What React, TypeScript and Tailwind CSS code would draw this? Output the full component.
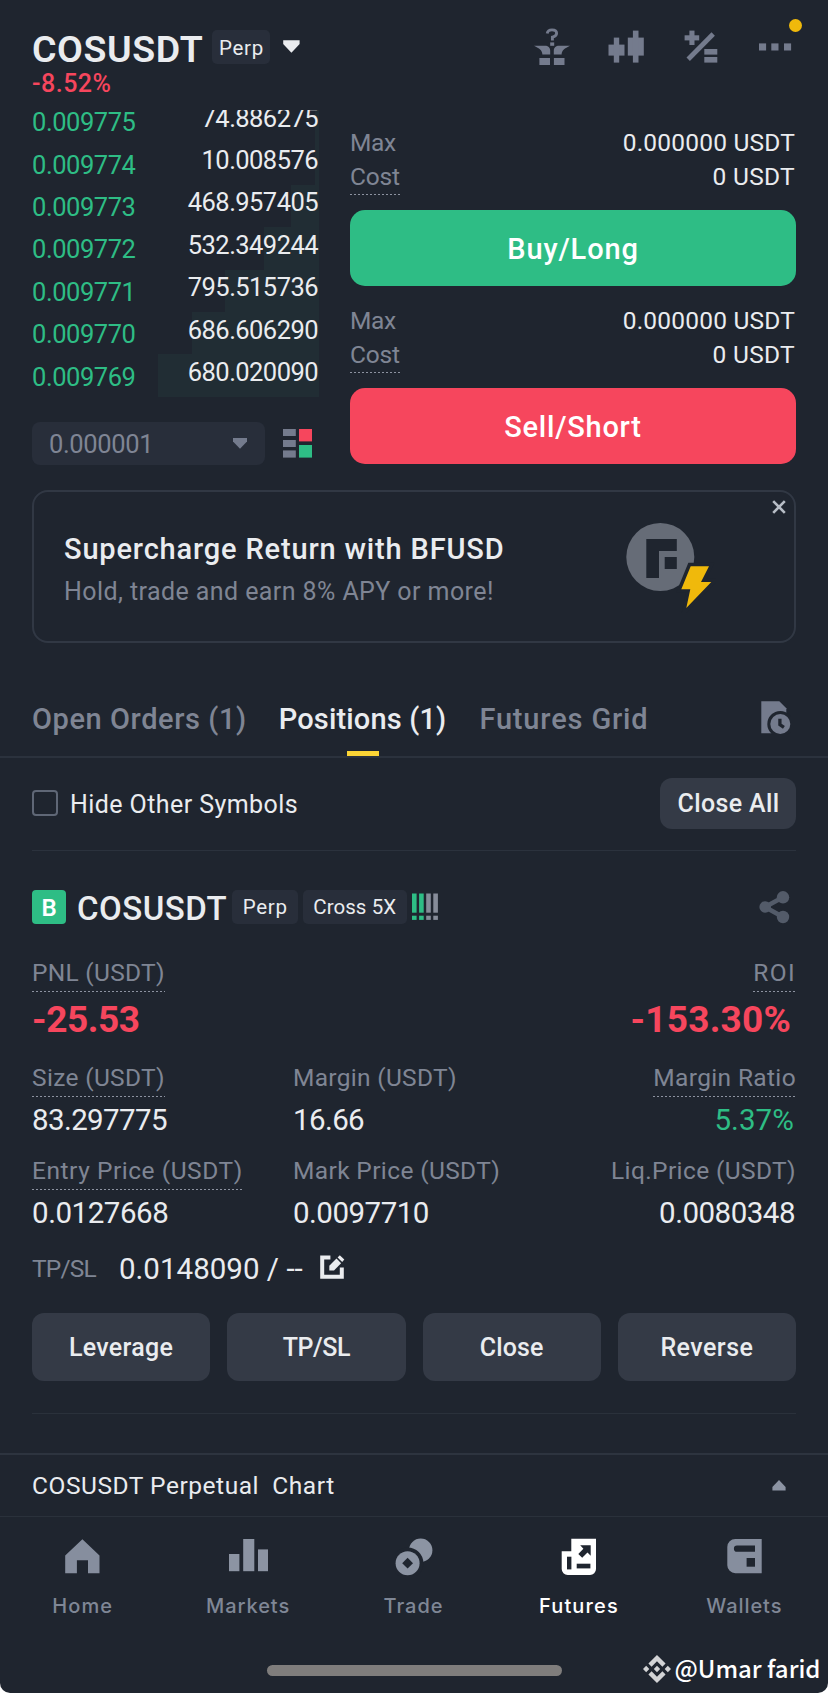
import type { ReactNode } from "react";
import { SiBinance } from "react-icons/si";

const book = [
  { price: "0.009775", qty: "74.886275", depth: 4 },
  { price: "0.009774", qty: "10.008576", depth: 4 },
  { price: "0.009773", qty: "468.957405", depth: 28 },
  { price: "0.009772", qty: "532.349244", depth: 55 },
  { price: "0.009771", qty: "795.515736", depth: 94 },
  { price: "0.009770", qty: "686.606290", depth: 127 },
  { price: "0.009769", qty: "680.020090", depth: 161 },
];

function GiftIcon() {
  return (
    <svg width="36" height="37" viewBox="0 0 36 37" fill="#747b8d">
      <path d="M13.2 5.4C13.6 3 15.2 1.9 18 1.9C21 1.9 22.6 3.2 22.6 5.3C22.6 7.5 20.9 8.5 18.4 9.1V12.4" fill="none" stroke="#747b8d" strokeWidth="2.9" />
      <rect x="16.2" y="14.4" width="4" height="3.4" />
      <path d="M0 17.8H11C14 17.8 16.2 19.8 16.2 22.6V26.4H8.4C8.2 22.4 5.4 20.4 0 17.8Z" />
      <path d="M36 17.8H25C22 17.8 19.8 19.8 19.8 22.6V26.4H27.6C27.8 22.4 30.6 20.4 36 17.8Z" />
      <rect x="5.4" y="30" width="10.6" height="7" />
      <rect x="19.9" y="30" width="10.6" height="7" />
    </svg>
  );
}

function CandlesIcon() {
  return (
    <svg width="36" height="33" viewBox="0 0 36 33" fill="#747b8d">
      <rect x="0.5" y="14.6" width="16" height="11" />
      <rect x="5.8" y="7.6" width="5.4" height="25" />
      <rect x="19.8" y="7.6" width="16" height="18" />
      <rect x="24.9" y="0.6" width="5.6" height="32" />
    </svg>
  );
}

function CalcIcon() {
  return (
    <svg width="36" height="33" viewBox="0 0 36 33" fill="#747b8d">
      <rect x="1.6" y="5.3" width="14.6" height="5.1" />
      <rect x="6.4" y="0.6" width="5.1" height="14.4" />
      <path d="M5.2 29.2L30.2 4" stroke="#747b8d" strokeWidth="4.8" />
      <rect x="21.3" y="19" width="13" height="5.6" />
      <rect x="21.3" y="27" width="13" height="5.6" />
    </svg>
  );
}

function MoreIcon() {
  return (
    <svg width="36" height="8" viewBox="0 0 36 8" fill="#747b8d">
      <rect x="2" y="0.4" width="7.1" height="7.1" />
      <rect x="14.3" y="0.4" width="7.2" height="7.1" />
      <rect x="27" y="0.4" width="7.1" height="7.1" />
    </svg>
  );
}

function BookLayoutIcon() {
  return (
    <svg width="30" height="29" viewBox="0 0 30 29">
      <g fill="#747b8d">
        <rect x="0" y="0" width="12.8" height="7" />
        <rect x="0" y="11" width="12.8" height="7" />
        <rect x="0" y="21.4" width="12.8" height="7.2" />
      </g>
      <rect x="16" y="0" width="13" height="12.4" fill="#f6465d" />
      <rect x="16" y="16" width="13" height="12.6" fill="#2ebd85" />
    </svg>
  );
}

function BannerArt() {
  return (
    <svg width="90" height="90" viewBox="0 0 90 90">
      <circle cx="34.3" cy="34" r="34" fill="#666c77" />
      <path d="M20.3 16H50.8V28H33V55H20.3Z" fill="#1f252f" />
      <rect x="38.7" y="34" width="12.1" height="12" fill="#1f252f" />
      <path
        d="M64.7 43.3H83L75 59H85.3L60.3 85L64.3 66.3H55.3Z"
        fill="#f0b90b"
        stroke="#1f252f"
        strokeWidth="7"
        paintOrder="stroke"
      />
    </svg>
  );
}

function HistoryIcon() {
  return (
    <svg width="30" height="34" viewBox="0 0 30 34">
      <path d="M0.3 0.3H18.3L25.3 7.3V32.3H0.3Z" fill="#747b8d" />
      <circle cx="19.3" cy="23" r="13" fill="#1f252f" />
      <circle cx="19.3" cy="23" r="10" fill="#747b8d" />
      <path d="M18.9 17.8V23.6L22.9 26.4" fill="none" stroke="#1f252f" strokeWidth="3.3" />
    </svg>
  );
}

function RiskIcon() {
  return (
    <svg width="27" height="28" viewBox="0 0 27 28">
      {[0, 7.1, 14.2, 21.3].map((x, i) => (
        <g key={x} fill={i < 2 ? "#2ebd85" : "#868c99"}>
          <rect x={x} y="0.5" width="4.6" height="19.2" />
          <rect x={x} y="22.7" width="4.6" height="4.2" />
        </g>
      ))}
    </svg>
  );
}

function ShareIcon() {
  return (
    <svg width="31" height="33" viewBox="0 0 31 33" fill="#535b69" stroke="#535b69">
      <path d="M24 6.3L6 16L24 26" fill="none" strokeWidth="4.6" />
      <circle cx="6.2" cy="16" r="5.8" stroke="none" />
      <circle cx="24" cy="6.3" r="6.2" stroke="none" />
      <circle cx="24" cy="26" r="6.2" stroke="none" />
    </svg>
  );
}

function EditIcon() {
  return (
    <svg width="25" height="25" viewBox="0 0 25 25" fill="#eaecef">
      <path d="M10.4 2.6H2.2V21.8H21.8V12.4" fill="none" stroke="#eaecef" strokeWidth="4" />
      <path d="M9.3 10.7L16.5 3.6L21.1 8.2L14 15.4H9.3Z" />
      <path d="M17.6 2.4L19.8 0.2L24.3 4.6L22.2 6.9Z" />
    </svg>
  );
}

function HomeIcon() {
  return (
    <svg width="35" height="35" viewBox="0 0 35 35" fill="#868e9e">
      <path d="M17.4 0.3L34.5 16.4V34.2H23V21.2H11.9V34.2H0.2V16.4Z" />
    </svg>
  );
}

function MarketsIcon() {
  return (
    <svg width="39" height="35" viewBox="0 0 39 35" fill="#8c94a3">
      <rect x="0" y="15" width="10.4" height="17.2" />
      <rect x="14.2" y="0" width="11.1" height="32.2" />
      <rect x="29" y="10.4" width="10" height="21.8" />
    </svg>
  );
}

function TradeIcon() {
  return (
    <svg width="38" height="38" viewBox="0 0 38 38" fill="#8c94a3">
      <circle cx="25.7" cy="12.3" r="11.7" />
      <circle cx="12.6" cy="25.2" r="15.8" fill="#1f252f" />
      <circle cx="12.6" cy="25.2" r="12" />
      <path d="M12.6 19.8L18 25.2L12.6 30.6L7.2 25.2Z" fill="#1f252f" />
    </svg>
  );
}

function FuturesIcon() {
  return (
    <svg width="36" height="38" viewBox="0 0 36 38" fill="#ffffff">
      <path d="M10.3 0.7H35V31A6 6 0 0 1 29 37H6.7A6 6 0 0 1 0.7 31V13.3H10.3Z" />
      <g fill="#1f252f">
        <rect x="6" y="18.7" width="4.4" height="12.7" />
        <rect x="15.7" y="25.7" width="13.7" height="4.7" />
        <path d="M29.7 7.3V17.7L26.5 14.6L21.2 19.8L17.3 16L22.4 10.8L19.2 7.3Z" />
      </g>
    </svg>
  );
}

function WalletIcon() {
  return (
    <svg width="35" height="35" viewBox="0 0 35 35" fill="#868e9e">
      <path d="M8.3 0H34.7V34.2H8.3A8 8 0 0 1 0.3 26.2V8A8 8 0 0 1 8.3 0Z" />
      <path d="M10 6.6H28V12.8H10A3.1 3.1 0 0 1 10 6.6Z" fill="#1f252f" />
      <rect x="19.6" y="19" width="8.4" height="8.7" fill="#1f252f" />
    </svg>
  );
}

function Dotted({ children }: { children: ReactNode }) {
  return (
    <span className="relative inline-block">
      {children}
      <span className="absolute -bottom-px left-0 h-px w-full bg-[repeating-linear-gradient(90deg,#8c92a0_0_2px,transparent_2px_4px)]" />
    </span>
  );
}

function OrderInfo() {
  return (
    <div className="text-[24.5px] leading-[34px]">
      <div className="flex justify-between pr-px">
        <span className="tracking-[-0.3px] text-[#7f8594]">Max</span>
        <span className="tracking-[0.2px]">0.000000 USDT</span>
      </div>
      <div className="flex justify-between pr-px">
        <span className="tracking-[-0.2px] text-[#7f8594]">
          <Dotted>Cost</Dotted>
        </span>
        <span className="tracking-[0.3px]">0 USDT</span>
      </div>
    </div>
  );
}

function Stat({
  label,
  value,
  dotted,
  right,
  labelClass,
  valueClass,
}: {
  label: string;
  value: string;
  dotted?: boolean;
  right?: boolean;
  labelClass: string;
  valueClass: string;
}) {
  return (
    <div className={right ? "text-right" : "text-left"}>
      <div className={"h-[36px] text-[24.5px] leading-[36px] text-[#7f8594] " + labelClass}>
        {dotted ? <Dotted>{label}</Dotted> : label}
      </div>
      <div className={"h-[40px] leading-[40px] " + valueClass}>{value}</div>
    </div>
  );
}

function NavItem({ icon, label, active, labelClass }: { icon: ReactNode; label: string; active?: boolean; labelClass: string }) {
  return (
    <div className="flex flex-1 flex-col items-center">
      <div className="flex h-[38px] items-center justify-center">{icon}</div>
      <div
        className={
          "mt-[15px] font-[Inter] text-[20px] leading-[30px] font-medium " +
          labelClass +
          (active ? " text-white" : " text-[#7f8796]")
        }
      >
        {label}
      </div>
    </div>
  );
}

export default function App() {
  return (
    <div className="h-[1693px] w-[828px] overflow-hidden bg-white">
      <div className="flex h-[1693px] flex-col rounded-b-[10px] bg-[#1f252f] font-[Roboto,sans-serif] whitespace-nowrap text-[#eaecef]">
        {/* Symbol header */}
        <header className="h-[110px] shrink-0 pt-[28px] pr-[35px] pl-[32px]">
          <div className="flex h-[40px] items-center">
            <h1 className="pt-px text-[37.5px] leading-[40px] font-semibold tracking-[0.6px]">COSUSDT</h1>
            <span className="mb-[2px] ml-[9px] flex h-[34px] w-[58px] items-center justify-center rounded-[5px] bg-[#282e3a] pt-[2px] text-[20.5px] tracking-[0.7px]">
              Perp
            </span>
            <svg className="mb-[3px] ml-[13px]" width="17" height="13" viewBox="0 0 17 13" fill="#eaecef">
              <path d="M0.2 0.3H16.6V4L8.4 12.8L0.2 4Z" />
            </svg>
            <div className="mb-[3px] ml-auto flex items-center gap-[38.4px]">
              <GiftIcon />
              <CandlesIcon />
              <CalcIcon />
              <span className="relative">
                <MoreIcon />
                <span className="absolute -top-[24px] left-[32px] size-[13px] rounded-full bg-[#f0b90b]" />
              </span>
            </div>
          </div>
          <div className="text-[25px] leading-[31px] font-medium tracking-[0.5px] text-[#f6465d]">-8.52%</div>
        </header>

        {/* Order book and order form */}
        <section className="flex h-[380px] shrink-0 pr-[32px] pl-[32px]">
          <div className="w-[287px]">
            <div className="h-[287px] overflow-hidden">
              <div className="-mt-[10px] text-[25.5px]">
                {book.map((row) => (
                  <div key={row.price} className="relative flex h-[42.4px] items-center justify-between">
                    <div className="absolute right-0 h-full bg-[#212d34]" style={{ width: row.depth }} />
                    <span className="relative pt-[2px] leading-[30px] tracking-[-0.45px] text-[#2ebd85]">{row.price}</span>
                    <span className="relative mb-[7px] pr-px leading-[30px] tracking-[-0.55px]">{row.qty}</span>
                  </div>
                ))}
              </div>
            </div>
            <div className="mt-[25px] flex items-center">
              <div className="flex h-[43px] w-[233px] items-center justify-between rounded-[8px] bg-[#282e3a] pr-[18px] pl-[17px]">
                <span className="pt-[2px] text-[25.5px] tracking-[-0.35px] text-[#7f8594]">0.000001</span>
                <svg width="14" height="11" viewBox="0 0 14 11" fill="#747b8d">
                  <path d="M0 0H14V3.4L7 10.8L0 3.4Z" />
                </svg>
              </div>
              <div className="ml-[18px]">
                <BookLayoutIcon />
              </div>
            </div>
          </div>

          <div className="ml-[31px] flex-1 pt-[16px]">
            <OrderInfo />
            <button className="mt-[15.5px] flex h-[76.5px] w-full items-center justify-center rounded-[15px] bg-[#2ebd85] pt-[3px] text-[29px] font-medium tracking-[0.85px] text-white">
              Buy/Long
            </button>
            <div className="h-[18px]" />
            <OrderInfo />
            <button className="mt-[15.5px] flex h-[76.5px] w-full items-center justify-center rounded-[15px] bg-[#f6465d] pt-[3px] text-[29px] font-medium tracking-[0.75px] text-white">
              Sell/Short
            </button>
          </div>
        </section>

        {/* Promotion */}
        <section className="relative mx-[32px] flex h-[153px] shrink-0 rounded-[16px] border-2 border-[#313844]">
          <div className="pt-[36px] pl-[30px]">
            <div className="text-[29px] leading-[42px] font-medium tracking-[0.83px]">Supercharge Return with BFUSD</div>
            <div className="text-[25px] leading-[43px] tracking-[0.42px] text-[#7f8594]">Hold, trade and earn 8% APY or more!</div>
          </div>
          <div className="mt-[31px] mr-[78px] ml-auto">
            <BannerArt />
          </div>
          <svg className="absolute top-[8px] right-[8px]" width="14" height="14" viewBox="0 0 14 14">
            <path d="M1.2 1.2L12.8 12.8M12.8 1.2L1.2 12.8" stroke="#b7bdc6" strokeWidth="2.6" />
          </svg>
        </section>

        {/* Tabs */}
        <nav className="mt-[43px] flex h-[72px] shrink-0 border-b-2 border-[#2b323d] px-[32px] text-[29px] font-medium">
          <div className="flex flex-1 gap-[32px] leading-[66px] text-[#7f8594]">
            <span className="tracking-[0.58px]">Open Orders (1)</span>
            <span className="relative tracking-[0.16px] text-[#eaecef]">
              Positions (1)
              <span className="absolute bottom-0 left-1/2 h-[5px] w-[32px] -translate-x-1/2 bg-[#fcd535]" />
            </span>
            <span className="pl-px tracking-[0.85px]">Futures Grid</span>
          </div>
          <div className="pt-[15px] pr-[5px]">
            <HistoryIcon />
          </div>
        </nav>

        {/* Filter row */}
        <div className="mx-[32px] flex h-[93px] shrink-0 items-center border-b-[1.5px] border-[#2b323d]">
          <span className="mb-[2px] size-[26px] rounded-[4px] border-2 border-[#5f6776]" />
          <span className="ml-[12px] pt-px text-[25px] tracking-[0.42px]">Hide Other Symbols</span>
          <button className="mb-px ml-auto h-[51px] w-[136px] rounded-[12px] bg-[#343a46] pt-px pl-px text-[25px] font-medium tracking-[0.38px]">
            Close All
          </button>
        </div>

        {/* Position */}
        <section className="flex h-[563px] shrink-0 flex-col px-[32px] pt-[39px]">
          <div className="flex h-[34px] items-center">
            <span className="flex size-[34px] items-center justify-center rounded-[4px] bg-[#2ebd85] pt-px text-[24px] font-semibold text-white">B</span>
            <span className="ml-[11px] pt-[4px] text-[33px] leading-[34px] font-medium tracking-[0.5px]">COSUSDT</span>
            <span className="ml-[5px] flex h-[34px] w-[66px] items-center justify-center rounded-[5px] bg-[#282e3a] pt-px text-[20.5px] tracking-[0.7px]">
              Perp
            </span>
            <span className="ml-[4.5px] flex h-[34px] w-[104px] items-center justify-center rounded-[5px] bg-[#282e3a] pt-px text-[20.5px] tracking-[0.05px]">
              Cross 5X
            </span>
            <span className="ml-[5px]">
              <RiskIcon />
            </span>
            <span className="mr-[6px] ml-auto">
              <ShareIcon />
            </span>
          </div>

          <div className="mt-[31px] flex justify-between">
            <Stat label="PNL (USDT)" value="-25.53" dotted labelClass="tracking-[0.29px]" valueClass="mt-[9px] text-[37px] font-bold text-[#f6465d] tracking-[-0.45px]" />
            <Stat label="ROI" value="-153.30%" dotted right labelClass="tracking-[1.4px]" valueClass="mt-[9px] text-[37px] font-bold text-[#f6465d] tracking-[0.2px] pr-[5px]" />
          </div>

          <div className="mt-[20px] grid grid-cols-[261px_1fr_auto]">
            <Stat label="Size (USDT)" value="83.297775" dotted labelClass="tracking-[0.33px]" valueClass="mt-[4px] text-[29.5px] tracking-[-0.6px]" />
            <Stat label="Margin (USDT)" value="16.66" labelClass="tracking-[0.3px]" valueClass="mt-[4px] text-[29.5px] tracking-[-0.6px]" />
            <Stat label="Margin Ratio" value="5.37%" dotted right labelClass="tracking-[0.35px]" valueClass="mt-[4px] text-[29.5px] tracking-[0.1px] text-[#2ebd85] pr-[2px]" />
          </div>
          <div className="mt-[13px] grid grid-cols-[261px_1fr_auto]">
            <Stat label="Entry Price (USDT)" value="0.0127668" dotted labelClass="tracking-[0.54px]" valueClass="mt-[4px] text-[29.5px] tracking-[-0.45px]" />
            <Stat label="Mark Price (USDT)" value="0.0097710" labelClass="tracking-[0.37px]" valueClass="mt-[4px] text-[29.5px] tracking-[-0.5px]" />
            <Stat label="Liq.Price (USDT)" value="0.0080348" right labelClass="tracking-[0.38px]" valueClass="mt-[4px] text-[29.5px] tracking-[-0.5px] pr-px" />
          </div>

          <div className="mt-[16px] flex h-[40px] items-center">
            <span className="text-[24.5px] tracking-[-0.8px] text-[#7f8594]">TP/SL</span>
            <span className="ml-[23px] text-[29.5px] tracking-[0.02px]">0.0148090 / --</span>
            <span className="mb-[3px] ml-[17px]">
              <EditIcon />
            </span>
          </div>

          <div className="mt-[23.5px] grid grid-cols-4 gap-[17px] text-[25px] font-medium">
            <button className="h-[68px] rounded-[12px] bg-[#343a46] pt-[2px] tracking-[0.33px]">Leverage</button>
            <button className="h-[68px] rounded-[12px] bg-[#343a46] pt-[2px] tracking-[-0.5px]">TP/SL</button>
            <button className="h-[68px] rounded-[12px] bg-[#343a46] pt-[2px] tracking-[0.14px]">Close</button>
            <button className="h-[68px] rounded-[12px] bg-[#343a46] pt-[2px] tracking-[0.45px]">Reverse</button>
          </div>
          <div className="mt-auto h-px bg-[#2a313b]" />
        </section>

        {/* Chart drawer */}
        <div className="mt-[39px] flex h-[64px] shrink-0 items-center justify-between border-t-2 border-b border-t-[#2d343f] border-b-[#2a313b] pr-[42px] pl-[32px]">
          <span className="pt-[2px] text-[24.5px] tracking-[0.54px] whitespace-pre">COSUSDT Perpetual  Chart</span>
          <svg width="14" height="11" viewBox="0 0 14 11" fill="#8c94a3">
            <path d="M7 0L13.6 7V10.4H0.4V7Z" />
          </svg>
        </div>

        {/* Bottom navigation */}
        <nav className="flex shrink-0 pt-[20.5px] pr-px">
          <NavItem icon={<HomeIcon />} label="Home" labelClass="tracking-[1.1px]" />
          <NavItem icon={<MarketsIcon />} label="Markets" labelClass="tracking-[0.92px]" />
          <NavItem icon={<TradeIcon />} label="Trade" labelClass="tracking-[1px]" />
          <NavItem icon={<FuturesIcon />} label="Futures" active labelClass="tracking-[1.15px]" />
          <NavItem icon={<WalletIcon />} label="Wallets" labelClass="tracking-[0.92px]" />
        </nav>

        <footer className="relative mt-[44.5px] flex justify-center">
          <div className="h-[11px] w-[295px] rounded-full bg-[#7f7d7c]" />
          <div className="absolute -top-[14px] right-[7.5px] flex h-[36px] items-center gap-[4px]">
            <SiBinance size={28} color="#d2d3d5" />
            <span className="pb-[2px] font-['Noto_Sans_CJK_SC',sans-serif] text-[24px] leading-[34px] font-medium text-white">@Umar farid</span>
          </div>
        </footer>
      </div>
    </div>
  );
}
